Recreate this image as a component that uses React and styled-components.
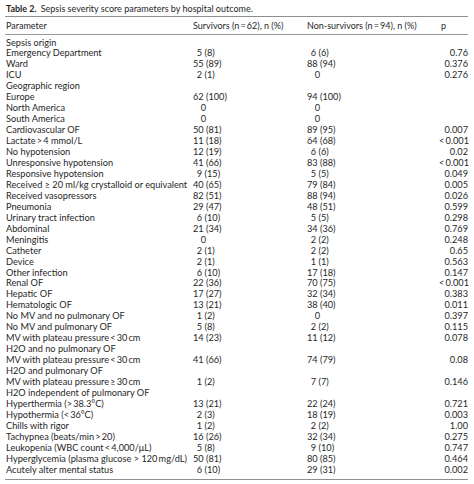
import React from 'react';
import styled, { createGlobalStyle } from 'styled-components';

const GlobalStyle = createGlobalStyle`
  body {
    margin: 0;
    background: #ffffff;
    font-family: 'Lato', 'Open Sans', sans-serif;
    color: #1f1f1f;
  }
`;

const Page = styled.div`
  width: 474px;
  height: 484px;
  padding: 3px 6px 0 5px;
  box-sizing: border-box;
  overflow: hidden;
`;

const Caption = styled.div`
  font-size: 9px;
  line-height: 11px;
  padding-left: 1px;
  margin-bottom: 2px;
  white-space: nowrap;
`;

const Label = styled.b`
  font-weight: 700;
  margin-right: 4px;
`;

const Table = styled.table`
  width: 463px;
  table-layout: fixed;
  border-collapse: collapse;
  border-top: 1.5px solid #8f8f8f;
  border-bottom: 1.5px solid #8f8f8f;
  font-size: 9.2px;
`;

const HeadRow = styled.tr`
  border-bottom: 1px solid #9a9a9a;
`;

const HeadCell = styled.th`
  font-weight: 400;
  font-size: 9px;
  text-align: left;
  white-space: nowrap;
  padding: 4px 0 4px ${(p) => p.$indent || 0}px;
  line-height: 9px;
`;

const Cell = styled.td`
  white-space: nowrap;
  line-height: 10.95px;
  padding: ${(p) => (p.$first ? '2.5px' : '0')} 0 ${(p) => (p.$last ? '3.5px' : '0')}
    ${(p) => p.$indent || 0}px;
  text-align: ${(p) => (p.$right ? 'right' : 'left')};
`;

const Num = styled.span`
  padding-left: ${(p) => p.$pad * 0.42}em;
`;

const rows = [
  ['Sepsis origin'],
  ['Emergency Department', '5 (8)', '6 (6)', '0.76'],
  ['Ward', '55 (89)', '88 (94)', '0.376'],
  ['ICU', '2 (1)', '0', '0.276'],
  ['Geographic region'],
  ['Europe', '62 (100)', '94 (100)', ''],
  ['North America', '0', '0', ''],
  ['South America', '0', '0', ''],
  ['Cardiovascular OF', '50 (81)', '89 (95)', '0.007'],
  ['Lactate\u2009>\u20094 mmol/L', '11 (18)', '64 (68)', '<\u20090.001'],
  ['No hypotension', '12 (19)', '6 (6)', '0.02'],
  ['Unresponsive hypotension', '41 (66)', '83 (88)', '<\u20090.001'],
  ['Responsive hypotension', '9 (15)', '5 (5)', '0.049'],
  ['Received ≥ 20 ml/kg crystalloid or equivalent', '40 (65)', '79 (84)', '0.005'],
  ['Received vasopressors', '82 (51)', '88 (94)', '0.026'],
  ['Pneumonia', '29 (47)', '48 (51)', '0.599'],
  ['Urinary tract infection', '6 (10)', '5 (5)', '0.298'],
  ['Abdominal', '21 (34)', '34 (36)', '0.769'],
  ['Meningitis', '0', '2 (2)', '0.248'],
  ['Catheter', '2 (1)', '2 (2)', '0.65'],
  ['Device', '2 (1)', '1 (1)', '0.563'],
  ['Other infection', '6 (10)', '17 (18)', '0.147'],
  ['Renal OF', '22 (36)', '70 (75)', '<\u20090.001'],
  ['Hepatic OF', '17 (27)', '32 (34)', '0.383'],
  ['Hematologic OF', '13 (21)', '38 (40)', '0.011'],
  ['No MV and no pulmonary OF', '1 (2)', '0', '0.397'],
  ['No MV and pulmonary OF', '5 (8)', '2 (2)', '0.115'],
  ['MV with plateau pressure\u2009<\u200930\u2009cm', '14 (23)', '11 (12)', '0.078'],
  ['H2O and no pulmonary OF'],
  ['MV with plateau pressure\u2009<\u200930\u2009cm', '41 (66)', '74 (79)', '0.08'],
  ['H2O and pulmonary OF'],
  ['MV with plateau pressure\u2009≥\u200930\u2009cm', '1 (2)', '7 (7)', '0.146'],
  ['H2O independent of pulmonary OF'],
  ['Hyperthermia (>\u200938.3°C)', '13 (21)', '22 (24)', '0.721'],
  ['Hypothermia (<\u200936°C)', '2 (3)', '18 (19)', '0.003'],
  ['Chills with rigor', '1 (2)', '2 (2)', '1.00'],
  ['Tachypnea (beats/min\u2009>\u200920)', '16 (26)', '32 (34)', '0.275'],
  ['Leukopenia (WBC count\u2009<\u20094,000/μL)', '5 (8)', '9 (10)', '0.747'],
  ['Hyperglycemia (plasma glucose > 120\u2009mg/dL)', '50 (81)', '80 (85)', '0.464'],
  ['Acutely alter mental status', '6 (10)', '29 (31)', '0.002'],
];

// single digit values sit one figure in, a bare zero two
const padFor = (value) => {
  if (!value) return 0;
  if (value === '0') return 2;
  return /^\d\s/.test(value) ? 1 : 0;
};

const App = () => {
  return (
    <Page>
      <GlobalStyle />
      <Caption>
        <Label>Table 2.</Label>
        Sepsis severity score parameters by hospital outcome.
      </Caption>
      <Table>
        <colgroup>
          <col style={{ width: 188 }} />
          <col style={{ width: 114 }} />
          <col style={{ width: 132 }} />
          <col style={{ width: 29 }} />
        </colgroup>
        <thead>
          <HeadRow>
            <HeadCell $indent={1}>Parameter</HeadCell>
            <HeadCell>Survivors (n{'\u2009'}={'\u2009'}62), n (%)</HeadCell>
            <HeadCell>Non-survivors (n{'\u2009'}={'\u2009'}94), n (%)</HeadCell>
            <HeadCell $indent={2}>p</HeadCell>
          </HeadRow>
        </thead>
        <tbody>
          {rows.map(([name, surv = '', nonSurv = '', p = ''], i) => {
            const first = i === 0;
            const last = i === rows.length - 1;
            return (
              <tr key={i}>
                <Cell $indent={1} $first={first} $last={last}>
                  {name}
                </Cell>
                <Cell $first={first} $last={last}>
                  <Num $pad={padFor(surv)}>{surv}</Num>
                </Cell>
                <Cell $first={first} $last={last}>
                  <Num $pad={padFor(nonSurv)}>{nonSurv}</Num>
                </Cell>
                <Cell $right $first={first} $last={last}>
                  {p}
                </Cell>
              </tr>
            );
          })}
        </tbody>
      </Table>
    </Page>
  );
};

export default App;
